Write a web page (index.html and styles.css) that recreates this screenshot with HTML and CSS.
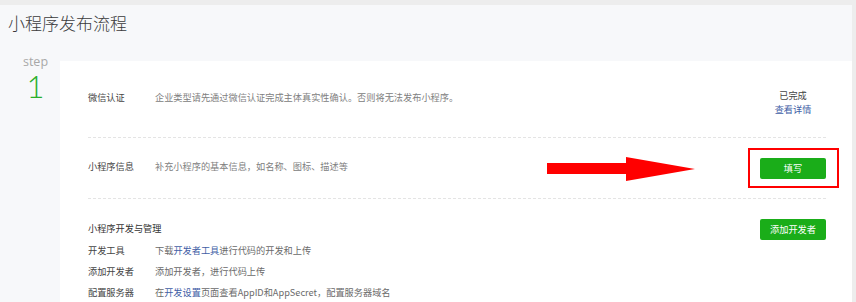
FILE: index.html
```html
<!DOCTYPE html>
<html lang="zh-CN">
<head>
    <meta charset="UTF-8">
    <meta name="viewport" content="width=device-width, initial-scale=1.0">
    <title>小程序发布流程</title>
    <link rel="stylesheet" href="styles.css">
</head>
<body>
    <div class="page">
        <header class="pageHead">
            <h1 class="title">小程序发布流程</h1>
        </header>

        <section class="step">
            <div class="stepSide">
                <div class="stepLabel">step</div>
                <div class="stepNum">1</div>
            </div>

            <div class="stepBody">
                <div class="row rowFirst">
                    <div class="rowLabel">微信认证</div>
                    <div class="rowDesc">企业类型请先通过微信认证完成主体真实性确认。否则将无法发布小程序。</div>
                    <div class="rowStatus">
                        <div>已完成</div>
                        <a class="link" href="#">查看详情</a>
                    </div>
                </div>

                <div class="row rowSecond">
                    <div class="rowLabel">小程序信息</div>
                    <div class="rowDesc">补充小程序的基本信息，如名称、图标、描述等</div>
                    <svg class="arrow" width="148" height="24" viewBox="0 0 148 24">
                        <rect x="0" y="6" width="80" height="11" fill="#ff0000"/>
                        <polygon points="79,0 148,12 79,24" fill="#ff0000"/>
                    </svg>
                    <div class="action marked">
                        <button class="btn">填写</button>
                    </div>
                </div>

                <div class="group">
                    <div class="groupHead">
                        <div class="groupTitle">小程序开发与管理</div>
                        <button class="btn">添加开发者</button>
                    </div>
                    <ul class="groupList">
                        <li><span class="rowLabel">开发工具</span><span class="rowDesc">下载<a class="link" href="#">开发者工具</a>进行代码的开发和上传</span></li>
                        <li><span class="rowLabel">添加开发者</span><span class="rowDesc">添加开发者，进行代码上传</span></li>
                        <li><span class="rowLabel">配置服务器</span><span class="rowDesc">在<a class="link" href="#">开发设置</a>页面查看AppID和AppSecret，配置服务器域名</span></li>
                    </ul>
                </div>
            </div>
        </section>
    </div>
</body>
</html>
```

FILE: styles.css
```css
* {
    margin: 0;
    padding: 0;
    box-sizing: border-box;
}

body {
    font-family: "Noto Sans CJK SC", "Noto Sans", sans-serif;
    background-color: #ededed;
    color: #333;
}

.page {
    margin: 5px 4px 0 0;
    background-color: #fff;
}

.pageHead {
    height: 56px;
    padding: 8px 0 0 8px;
    background-color: #f7f8fa;
}

.title {
    font-size: 17px;
    font-weight: 300;
    line-height: 20px;
    color: #3a3a3a;
}

.step {
    display: flex;
    background-color: #f7f8fa;
}

.stepSide {
    width: 60px;
    padding-left: 11px;
    text-align: center;
}

.stepLabel {
    margin-top: -6px;
    font-family: "Open Sans", "Noto Sans", sans-serif;
    font-size: 12.5px;
    line-height: 14px;
    color: #a8a8a8;
}

.stepNum {
    margin-top: 4px;
    font-family: "Lato", "Noto Sans", sans-serif;
    font-size: 31px;
    font-weight: 300;
    line-height: 26px;
    color: #2aaf2a;
}

.stepBody {
    flex: 1;
    padding: 0 26px 0 28px;
    background-color: #fff;
    font-size: 9.2px;
}

.row {
    position: relative;
    display: flex;
    border-bottom: 1px dashed #e4e4e4;
}

.rowFirst {
    height: 77px;
    padding-top: 29px;
    align-items: flex-start;
}

.rowSecond {
    height: 61px;
    align-items: center;
}

.rowSecond .rowLabel,
.rowSecond .rowDesc {
    margin-top: -5px;
}

.rowLabel {
    display: inline-block;
    width: 67px;
    line-height: 14px;
    color: #444;
}

.rowDesc {
    flex: 1;
    line-height: 14px;
    color: #808080;
}

.rowStatus {
    width: 66px;
    margin-top: -2px;
    text-align: center;
    line-height: 14px;
    color: #444;
}

.link {
    color: #3f5ea6;
    text-decoration: none;
}

.arrow {
    position: absolute;
    left: 459px;
    top: 19px;
}

.action {
    position: relative;
}

.marked::after {
    content: "";
    position: absolute;
    top: -10px;
    right: -13px;
    bottom: -9px;
    left: -12px;
    border: 2px solid #ff0000;
}

.btn {
    display: block;
    width: 66px;
    height: 21px;
    border: none;
    border-radius: 2px;
    background-color: #1aad19;
    color: #fff;
    font-family: inherit;
    font-size: 9.2px;
    line-height: 21px;
    cursor: pointer;
}

.group {
    padding-top: 20px;
}

.groupHead {
    display: flex;
    justify-content: space-between;
    align-items: flex-start;
}

.groupTitle {
    line-height: 16px;
    margin-top: 1px;
}

.groupList {
    list-style: none;
    padding-bottom: 20px;
}

.groupList li {
    display: flex;
    line-height: 21px;
}

.groupList .rowLabel,
.groupList .rowDesc {
    line-height: 21px;
}

.groupList .rowDesc {
    color: #6a6a6a;
}
```
